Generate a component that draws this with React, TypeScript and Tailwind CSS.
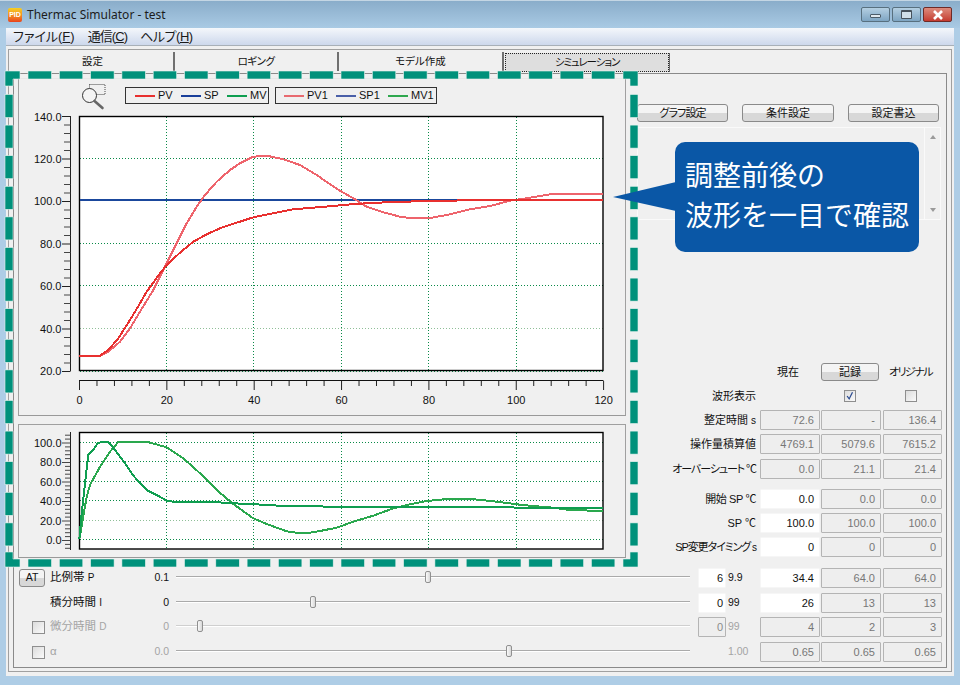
import React from "react";

type P = [number, number];
const pts = (ox: number, oy: number, a: P[]) => a.map(([x, y]) => `${(ox + x / 3).toFixed(1)},${(oy + y / 3).toFixed(1)}`).join(" ");

const pv = pts(40, 100, [[118,767],[180,767],[205,750],[235,715],[270,660],[300,610],[320,575],[360,520],[380,495],[420,458],[460,425],[500,403],[540,385],[590,368],[640,352],[700,340],[760,328],[820,323],[900,316]]) + " " + pts(330, 100, [[28,315],[85,312],[115,309],[198,306],[315,302],[560,300],[820,300]]);
const pv1 = pts(40, 100, [[118,767],[180,767],[205,755],[240,725],[270,685],[300,635],[340,570],[380,490],[410,430],[440,370],[470,320],[495,285],[530,245],[570,210],[600,190],[640,170],[680,167],[730,178],[780,195],[830,225]]) + " " + pts(330, 100, [[0,253],[30,272],[70,295],[110,320],[160,337],[210,350],[240,354],[300,354],[350,345],[420,328],[480,318],[540,302],[600,293],[660,283],[750,281],[820,282]]);
const mv = pts(0, 340, [[238,598],[245,520],[255,430],[265,345],[275,335],[295,308],[325,305],[345,330],[375,370],[395,400],[415,425],[440,450],[470,465],[500,482],[520,485],[640,486],[700,490],[790,494],[850,498],[960,499]]) + " " + pts(320, 340, [[30,501],[575,501],[590,505],[850,505]]);
const mv1 = pts(0, 340, [[238,598],[248,540],[260,470],[270,435],[300,380],[330,335],[355,306],[440,305],[500,322],[550,355],[600,400],[650,450],[700,492],[760,535],[800,552],[860,574],[890,578],[930,578],[960,573]]) + " " + pts(320, 340, [[50,563],[100,545],[160,527],[220,505],[270,493],[320,483],[380,477],[455,477],[520,484],[600,494],[640,498],[700,503],[750,510],[850,513]]);

const GREEN = "#0a8a48";
const vx = [166.5, 253.5, 341.5, 428.5, 516.5];

function Grid({ top, bottom, hs, light }: { top: number; bottom: number; hs: number[]; light: number }) {
  return (
    <g fill="none" strokeWidth="1">
      {hs.map((y) => (
        <line key={y} x1="80" x2="603" y1={y} y2={y} stroke={y === light ? "#8fbf98" : GREEN} strokeDasharray="1 2" />
      ))}
      {vx.map((x) => (
        <line key={x} x1={x} x2={x} y1={top} y2={bottom} stroke={GREEN} strokeDasharray="1 2" />
      ))}
    </g>
  );
}

function Chart1() {
  const labels: [string, number][] = [["140.0", 116.5], ["120.0", 158.5], ["100.0", 200.5], ["80.0", 243.5], ["60.0", 285.5], ["40.0", 328.5], ["20.0", 371]];
  return (
    <svg viewBox="19 110 606 305" className="block w-[606px] h-[305px]">
      <rect x="79" y="116" width="524" height="255" fill="#fff" />
      <Grid top={117} bottom={370} hs={[158.5, 243.5, 285.5, 328.5, 371.5]} light={328.5} />
      <rect x="79.5" y="116.5" width="523.5" height="254" fill="none" stroke="#000" strokeWidth="1.4" />
      <line x1="70.5" x2="70.5" y1="116" y2="371" stroke="#222" />
      {Array.from({ length: 31 }, (_, i) => {
        const y = 116.5 + i * 8.5;
        return <line key={i} x1={i % 5 === 0 ? 62 : 64} x2="70.5" y1={y} y2={y} stroke={i % 5 === 0 ? "#222" : "#444"} />;
      })}
      {labels.map(([t, y]) => (
        <text key={t} x="61.5" y={y + 4} textAnchor="end" fontSize="11" fill="#111">{t}</text>
      ))}
      <line x1="79" x2="603.5" y1="380.5" y2="380.5" stroke="#111" />
      {Array.from({ length: 31 }, (_, i) => {
        const x = 79.5 + i * 17.47;
        return <line key={i} x1={x} x2={x} y1="381" y2={i % 5 === 0 ? 390 : 386} stroke="#222" />;
      })}
      {[0, 20, 40, 60, 80, 100, 120].map((v, i) => (
        <text key={v} x={79.5 + i * 87.35} y="404" textAnchor="middle" fontSize="11" fill="#111">{v}</text>
      ))}
      <line x1="80" x2="500" y1="200" y2="200" stroke="#1a479c" strokeWidth="2" />
      <polyline points={pv1} fill="none" stroke="#ee646c" strokeWidth="2" shapeRendering="crispEdges" />
      <polyline points={pv} fill="none" stroke="#e8302f" strokeWidth="2" shapeRendering="crispEdges" />
    </svg>
  );
}

function Chart2() {
  const labels: [string, number][] = [["100.0", 442.5], ["80.0", 461.5], ["60.0", 481.5], ["40.0", 500.5], ["20.0", 520.5], ["0.0", 539.5]];
  return (
    <svg viewBox="19 425 606 132" className="block w-[606px] h-[132px]">
      <rect x="79" y="432" width="524" height="117" fill="#fff" />
      <Grid top={433} bottom={548} hs={[442.5, 461.5, 481.5, 500.5, 520.5, 539.5]} light={520.5} />
      <rect x="79.5" y="432.5" width="523.5" height="116.5" fill="none" stroke="#000" strokeWidth="1.4" />
      <line x1="70.5" x2="70.5" y1="432" y2="550" stroke="#222" />
      {Array.from({ length: 30 }, (_, i) => {
        const y = 435.2 + i * 3.9;
        return <line key={i} x1={(i - 2) % 5 === 0 ? 62 : 65} x2="70.5" y1={y} y2={y} stroke="#333" strokeWidth="0.9" />;
      })}
      {labels.map(([t, y]) => (
        <text key={t} x="61.5" y={y + 4} textAnchor="end" fontSize="11" fill="#111">{t}</text>
      ))}
      <polyline points={mv1} fill="none" stroke="#2aa84e" strokeWidth="2" shapeRendering="crispEdges" />
      <polyline points={mv} fill="none" stroke="#0f9e50" strokeWidth="2" shapeRendering="crispEdges" />
    </svg>
  );
}

function LegendItem({ color, label, w }: { color: string; label: string; w: string }) {
  return (
    <div className={`flex items-center ${w}`}>
      <div className="w-[20px] h-[2px]" style={{ backgroundColor: color }} />
      <span className="ml-[3px] text-[11px] leading-none text-[#111]">{label}</span>
    </div>
  );
}

function Cell({ v, white, cls }: { v: string; white?: boolean; cls: string }) {
  return (
    <div className={`h-[20px] flex items-center justify-end pr-[5px] text-[11px] rounded-[1px] border ${cls} ${white ? "bg-white border-[#f6f6f6] text-[#111]" : "bg-[#eeeeee] border-[#b4b4b4] text-[#777]"}`}>
      {v}
    </div>
  );
}

function Cells({ a, b, c, white }: { a: string; b: string; c: string; white?: boolean }) {
  return (
    <>
      <Cell v={a} white={white} cls="w-[60px]" />
      <Cell v={b} cls="w-[60px] ml-[1px]" />
      <Cell v={c} cls="w-[59px] ml-[2px]" />
    </>
  );
}

function TableRow({ label, a, b, c, white, cls }: { label: React.ReactNode; a: string; b: string; c: string; white?: boolean; cls: string }) {
  return (
    <div className={`flex items-center ${cls}`}>
      <div className="w-[120px] pr-[1px] text-right text-[11px] text-[#111] whitespace-nowrap">{label}</div>
      <div className="w-[3px]" />
      <Cells a={a} b={b} c={c} white={white} />
    </div>
  );
}

function Check({ checked, cls }: { checked?: boolean; cls: string }) {
  return (
    <div className={`border border-[#8e8e8e] bg-linear-to-br from-[#dcdcdc] to-[#fafafa] flex items-center justify-center ${cls}`}>
      {checked && (
        <svg viewBox="0 0 12 12" className="w-[10px] h-[10px]">
          <path d="M2.5 6 L5 9.5 L9 1.5" fill="none" stroke="#2a4a90" strokeWidth="1.5" />
        </svg>
      )}
    </div>
  );
}

function Btn({ children, cls }: { children: React.ReactNode; cls: string }) {
  return (
    <div className={`flex items-center justify-center rounded-[3px] border border-[#8a8a8a] bg-linear-to-b from-[#f4f4f4] from-50% to-[#d8d8d8] to-50% text-[11px] text-[#111] ${cls}`}>
      {children}
    </div>
  );
}

function SliderRow(props: {
  control: React.ReactNode;
  label: string;
  unit: string;
  min: string;
  thumb: string;
  input?: string;
  max: string;
  a: string;
  b: string;
  c: string;
  white?: boolean;
  disabled?: boolean;
  track: string;
  cls: string;
}) {
  const txt = props.disabled ? "text-[#a4a4a4]" : "text-[#111]";
  return (
    <div className={`flex items-center h-[20px] ${props.cls}`}>
      <div className="w-[36px] flex items-center">{props.control}</div>
      <div className={`w-[90px] text-[11.5px] whitespace-nowrap ${txt}`}>
        {props.label} <span className="text-[10px]">{props.unit}</span>
      </div>
      <div className={`w-[29px] text-right text-[10.5px] ${txt}`}>{props.min}</div>
      <div className="relative w-[514px] h-[20px] ml-[7px]">
        <div className={`absolute left-0 right-0 top-[8px] h-[2px] border-b border-white ${props.track}`} />
        <div className={`absolute top-[3px] w-[6px] h-[12px] rounded-[2px] border border-[#909090] bg-linear-to-r from-[#fafafa] to-[#d8d8d8] ${props.thumb}`} />
      </div>
      <div className="ml-[8px] w-[28px]">
        {props.input !== undefined ? (
          <div className={`h-[20px] flex items-center justify-end pr-[2px] text-[11px] border rounded-[1px] ${props.white ? "bg-white border-[#f6f6f6] text-[#111]" : "bg-[#eeeeee] border-[#b4b4b4] text-[#8a8a8a]"}`}>
            {props.input}
          </div>
        ) : null}
      </div>
      <div className={`w-[34px] pl-[2px] text-[10.5px] ${txt}`}>{props.max}</div>
      <Cells a={props.a} b={props.b} c={props.c} white={props.white} />
    </div>
  );
}

function WinBtn({ cls, children }: { cls: string; children: React.ReactNode }) {
  return <div className={`h-[15px] flex items-center justify-center rounded-[2px] border ${cls}`}>{children}</div>;
}

function Overlay() {
  const top = Array.from({ length: 19 }, (_, i) => 28 + i * 31.3).filter((x) => x < 610);
  const side = Array.from({ length: 15 }, (_, i) => 94.5 + i * 30.6).filter((y) => y < 535);
  const c = "#00917b";
  const h = "#e6f2ef";
  return (
    <svg viewBox="0 0 960 685" className="absolute left-0 top-0 w-[960px] h-[685px] pointer-events-none">
      <g fill={c} stroke={h} strokeWidth="0.6">
        {top.map((x) => (
          <React.Fragment key={x}>
            <rect x={x} y="71" width="23.5" height="8" />
            <rect x={x} y="559" width="23.5" height="8" />
          </React.Fragment>
        ))}
        {side.map((y) => (
          <React.Fragment key={y}>
            <rect x="5" y={y} width="8" height="23" />
            <rect x="630" y={y} width="8" height="23" />
          </React.Fragment>
        ))}
        <path d="M5 71 H20 V79 H13 V86 H5 Z" />
        <path d="M623 71 H638 V86 H630 V79 H623 Z" />
        <path d="M5 552 H13 V559 H20 V567 H5 Z" />
        <path d="M630 552 H638 V567 H623 V559 H630 Z" />
      </g>
      <polygon points="613,197 676,182 676,211" fill="#0a57a6" />
    </svg>
  );
}

export default function App() {
  return (
    <div className="relative w-[960px] h-[685px] overflow-hidden flex flex-col bg-[#aecde6] [font-family:'Liberation_Sans','Noto_Sans_CJK_JP',sans-serif] [font-feature-settings:'palt']">
      {/* title bar */}
      <div className="h-[28px] shrink-0 flex items-center bg-linear-to-b from-[#8aadca] to-[#a9cae4] border-t border-[#c4d6e4]">
        <div className="ml-[8px] w-[14px] h-[14px] rounded-[2px] bg-linear-to-b from-[#f6d020] to-[#e8401c] flex items-center justify-center text-[7px] font-bold text-white leading-none">
          PID
        </div>
        <div className="ml-[5px] text-[12px] text-[#1c1c1c] [font-family:'Noto_Sans',sans-serif]">Thermac Simulator - test</div>
        <div className="ml-auto mr-[8px] flex">
          <WinBtn cls="w-[29px] border-[#58707f] bg-linear-to-b from-[#b4cfe2] to-[#7ea5c2]">
            <div className="w-[11px] h-[4px] mt-[3px] bg-[#dfe8ee] border border-[#4c5c68] rounded-[1px]" />
          </WinBtn>
          <WinBtn cls="w-[29px] ml-[2px] border-[#58707f] bg-linear-to-b from-[#b4cfe2] to-[#7ea5c2]">
            <div className="w-[11px] h-[9px] border border-t-2 border-[#46525c] bg-[#d0dfe9] rounded-[1px]" />
          </WinBtn>
          <WinBtn cls="w-[29px] ml-[2px] border-[#6e2a26] bg-linear-to-b from-[#dc8a7c] to-[#c43a30]">
            <svg viewBox="0 0 12 10" className="w-[12px] h-[10px]">
              <path d="M2 1 L10 9 M10 1 L2 9" stroke="#fff" strokeWidth="2.6" />
            </svg>
          </WinBtn>
        </div>
      </div>
      {/* menu */}
      <div className="h-[18px] shrink-0 mx-[6px] pl-[7px] flex items-center gap-[13px] bg-linear-to-b from-[#f4f7fb] to-[#cdd8ec] border-b border-[#a8b0b8] text-[13px] text-[#1a1a1a]">
        <span>ファイル(<u>F</u>)</span>
        <span className="tracking-[-0.9px]">通信(<u>C</u>)</span>
        <span className="tracking-[-0.5px]">ヘルプ(<u>H</u>)</span>
      </div>
      {/* client */}
      <div className="flex-1 mx-[6px] mb-[9px] bg-[#f0f0f0] px-[2px] pt-[3px] pb-[4px] flex flex-col">
        <div className="flex-1 border-t border-l border-r border-b border-[#a0a0a0] flex flex-col">
          {/* tabs */}
          <div className="h-[23px] flex pl-[3px] pt-[2px] text-[10.5px] text-[#111]">
            <div className="w-[163px] h-[19px] flex items-center justify-center border-r-2 border-[#707070]">設定</div>
            <div className="w-[164px] h-[19px] flex items-center justify-center border-r-2 border-[#707070] tracking-[-0.5px]">ロギング</div>
            <div className="w-[165px] h-[19px] flex items-center justify-center border-r-2 border-[#707070]">モデル作成</div>
            <div className="w-[164px] h-[19px] mt-[1px] flex items-center justify-center bg-[#dedede] border border-dotted border-[#222] ml-[1px] shadow-[1px_0_0_#666] tracking-[-1.1px]">シミュレーション</div>
          </div>
          {/* panel */}
          <div className="flex-1 mx-[4px] mb-[3px] border border-[#8a8a8a] flex flex-col">
            <div className="flex">
              {/* charts */}
              <div className="ml-[4px] mt-[4px] w-[608px] flex flex-col">
                <div className="h-[338px] border border-[#a0a0a0] border-t-[#e8e8e8] border-b-[#999]">
                  <div className="h-[31px] flex items-start pl-[63px] pt-[5px]">
                    <svg viewBox="0 0 24 26" className="w-[24px] h-[26px] shrink-0">
                      <rect x="7.5" y="0.5" width="15.5" height="10" fill="none" stroke="#333" strokeWidth="0.9" strokeDasharray="1 1" />
                      <circle cx="7.5" cy="11.5" r="7" fill="#f4f4f4" stroke="#333" strokeWidth="1" />
                      <path d="M12.5 17 L20.5 24" stroke="#666" strokeWidth="2.6" strokeLinecap="round" />
                    </svg>
                    <div className="ml-[19px] mt-[3px] w-[144px] h-[17px] border border-[#333] pl-[9px] flex items-center">
                      <LegendItem color="#e8302f" label="PV" w="w-[46px]" />
                      <LegendItem color="#1a3f9a" label="SP" w="w-[46px]" />
                      <LegendItem color="#0e9e50" label="MV" w="w-[40px]" />
                    </div>
                    <div className="ml-[6px] mt-[3px] w-[162px] h-[17px] border border-[#333] pl-[8px] flex items-center">
                      <LegendItem color="#e86a70" label="PV1" w="w-[52px]" />
                      <LegendItem color="#4a5fa8" label="SP1" w="w-[52px]" />
                      <LegendItem color="#2fa84f" label="MV1" w="w-[46px]" />
                    </div>
                  </div>
                  <Chart1 />
                </div>
                <div className="mt-[8px] h-[134px] border border-[#a0a0a0] border-b-[#999]">
                  <Chart2 />
                </div>
              </div>
              {/* right */}
              <div className="ml-[11px] w-[305px] flex flex-col">
                <div className="mt-[30px] flex">
                  <Btn cls="w-[91px] h-[18px] tracking-[-0.9px]">グラフ設定</Btn>
                  <Btn cls="w-[92px] h-[18px] ml-[14px]">条件設定</Btn>
                  <Btn cls="w-[91px] h-[18px] ml-[14px]">設定書込</Btn>
                </div>
                <div className="mt-[5px] w-[304px] h-[93px] border border-[#fafafa] flex justify-end">
                  <div className="w-[16px] border-l border-[#fafafa] flex flex-col items-center justify-between py-[7px]">
                    <div className="w-0 h-0 border-x-[3px] border-x-transparent border-b-[4px] border-b-[#9a9a9a]" />
                    <div className="w-0 h-0 border-x-[3px] border-x-transparent border-t-[4px] border-t-[#9a9a9a]" />
                  </div>
                </div>
                <div className="mt-[143px] h-[18px] flex items-center text-[11px] text-[#111]">
                  <div className="w-[123px]" />
                  <div className="w-[60px] text-center pt-[1px] -ml-[2px]">現在</div>
                  <Btn cls="w-[58px] h-[18px] ml-[3px]">記録</Btn>
                  <div className="w-[62px] text-center tracking-[-1.5px] pl-[1px]">オリジナル</div>
                </div>
                <div className="mt-[8px] h-[14px] flex items-center">
                  <div className="w-[120px] pr-[1px] text-right text-[11px] text-[#111]">波形表示</div>
                  <Check checked cls="w-[12px] h-[12px] ml-[87px]" />
                  <Check cls="w-[12px] h-[12px] ml-[49px]" />
                </div>
                <TableRow cls="mt-[7px]" label={<>整定時間 <span className="text-[10px]">s</span></>} a="72.6" b="-" c="136.4" />
                <TableRow cls="mt-[4px]" label="操作量積算値" a="4769.1" b="5079.6" c="7615.2" />
                <TableRow cls="mt-[5px]" label={<span className="tracking-[-1.1px]">オーバーシュート ℃</span>} a="0.0" b="21.1" c="21.4" />
                <TableRow cls="mt-[10px]" white label={<span className="tracking-[-0.4px]">開始 SP ℃</span>} a="0.0" b="0.0" c="0.0" />
                <TableRow cls="mt-[4px]" white label="SP ℃" a="100.0" b="100.0" c="100.0" />
                <TableRow cls="mt-[4px]" white label={<span className="tracking-[-1.1px]">SP変更タイミング <span className="text-[10px]">s</span></span>} a="0" b="0" c="0" />
              </div>
            </div>
            {/* slider rows */}
            <SliderRow cls="mt-[10px]" white control={<Btn cls="ml-[5px] w-[26px] h-[18px] !text-[10.5px]">AT</Btn>} label="比例帯" unit="P" min="0.1" thumb="left-[249px]" input="6" max="9.9" a="34.4" b="64.0" c="64.0" track="bg-[#aaaaaa]" />
            <SliderRow cls="mt-[5px]" white control={null} label="積分時間" unit="I" min="0" thumb="left-[134px]" input="0" max="99" a="26" b="13" c="13" track="bg-[#aaaaaa]" />
            <SliderRow cls="mt-[4px]" disabled control={<Check cls="ml-[18px] w-[13px] h-[13px]" />} label="微分時間" unit="D" min="0" thumb="left-[21px]" input="0" max="99" a="4" b="2" c="3" track="bg-[#cfcfcf]" />
            <SliderRow cls="mt-[5px]" disabled control={<Check cls="ml-[18px] w-[13px] h-[13px]" />} label="α" unit="" min="0.0" thumb="left-[330px]" max="1.00" a="0.65" b="0.65" c="0.65" track="bg-[#aaaaaa]" />
          </div>
        </div>
      </div>
      <Overlay />
      {/* callout */}
      <div className="absolute left-[675px] top-[142px] w-[244px] h-[110px] rounded-[10px] bg-[#0a57a6] pl-[10px] pt-[15px] text-[28px] leading-[40px] text-white [font-feature-settings:normal] whitespace-nowrap">
        <div>調整前後の</div>
        <div>波形を一目で確認</div>
      </div>
    </div>
  );
}
